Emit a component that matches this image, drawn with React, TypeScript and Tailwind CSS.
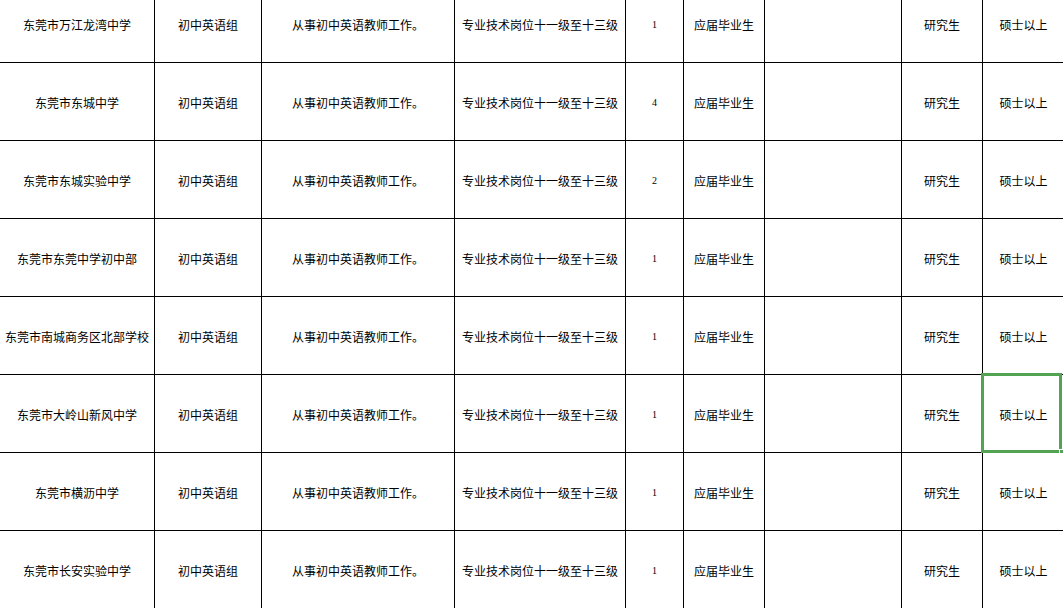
import React from "react";

const schools = [
  ["东莞市万江龙湾中学", "1"],
  ["东莞市东城中学", "4"],
  ["东莞市东城实验中学", "2"],
  ["东莞市东莞中学初中部", "1"],
  ["东莞市南城商务区北部学校", "1"],
  ["东莞市大岭山新风中学", "1"],
  ["东莞市横沥中学", "1"],
  ["东莞市长安实验中学", "1"],
];

const cell =
  "h-full shrink-0 border-r border-black flex items-center justify-center pt-[2px] whitespace-nowrap";

export default function App() {
  return (
    <div
      className="w-[1063px] h-[608px] overflow-hidden bg-white text-black text-[12px]"
      style={{ fontFamily: '"Noto Sans CJK SC", "Noto Sans", sans-serif' }}
    >
      <div className="-mt-[15px] flex flex-col w-[1100px]">
        {schools.map(([name, n], i) => (
          <div key={i} className="flex h-[78px] border-b border-black box-border">
            <div className={`${cell} w-[155px]`}>{name}</div>
            <div className={`${cell} w-[107px]`}>初中英语组</div>
            <div className={`${cell} w-[193px]`}>从事初中英语教师工作。</div>
            <div className={`${cell} w-[171px]`}>专业技术岗位十一级至十三级</div>
            <div
              className={`${cell} w-[58px] text-[10px] text-black`}
              style={{ fontFamily: '"Liberation Serif", serif' }}
            >
              {n}
            </div>
            <div className={`${cell} w-[81px]`}>应届毕业生</div>
            <div className={`${cell} w-[137px]`}></div>
            <div className={`${cell} w-[81px]`}>研究生</div>
            <div className="relative h-full w-[81px] shrink-0 flex items-center justify-center pt-[2px] whitespace-nowrap">
              硕士以上
              {i === 5 && (
                <>
                  <div className="absolute left-[-2px] top-[-2px] w-[81px] h-[80px] border-[3px] border-[#52a352]" />
                  <div className="absolute left-[76px] top-[74px] w-[5px] h-[5px] bg-[#52a352] border border-white" />
                </>
              )}
            </div>
          </div>
        ))}
      </div>
    </div>
  );
}
